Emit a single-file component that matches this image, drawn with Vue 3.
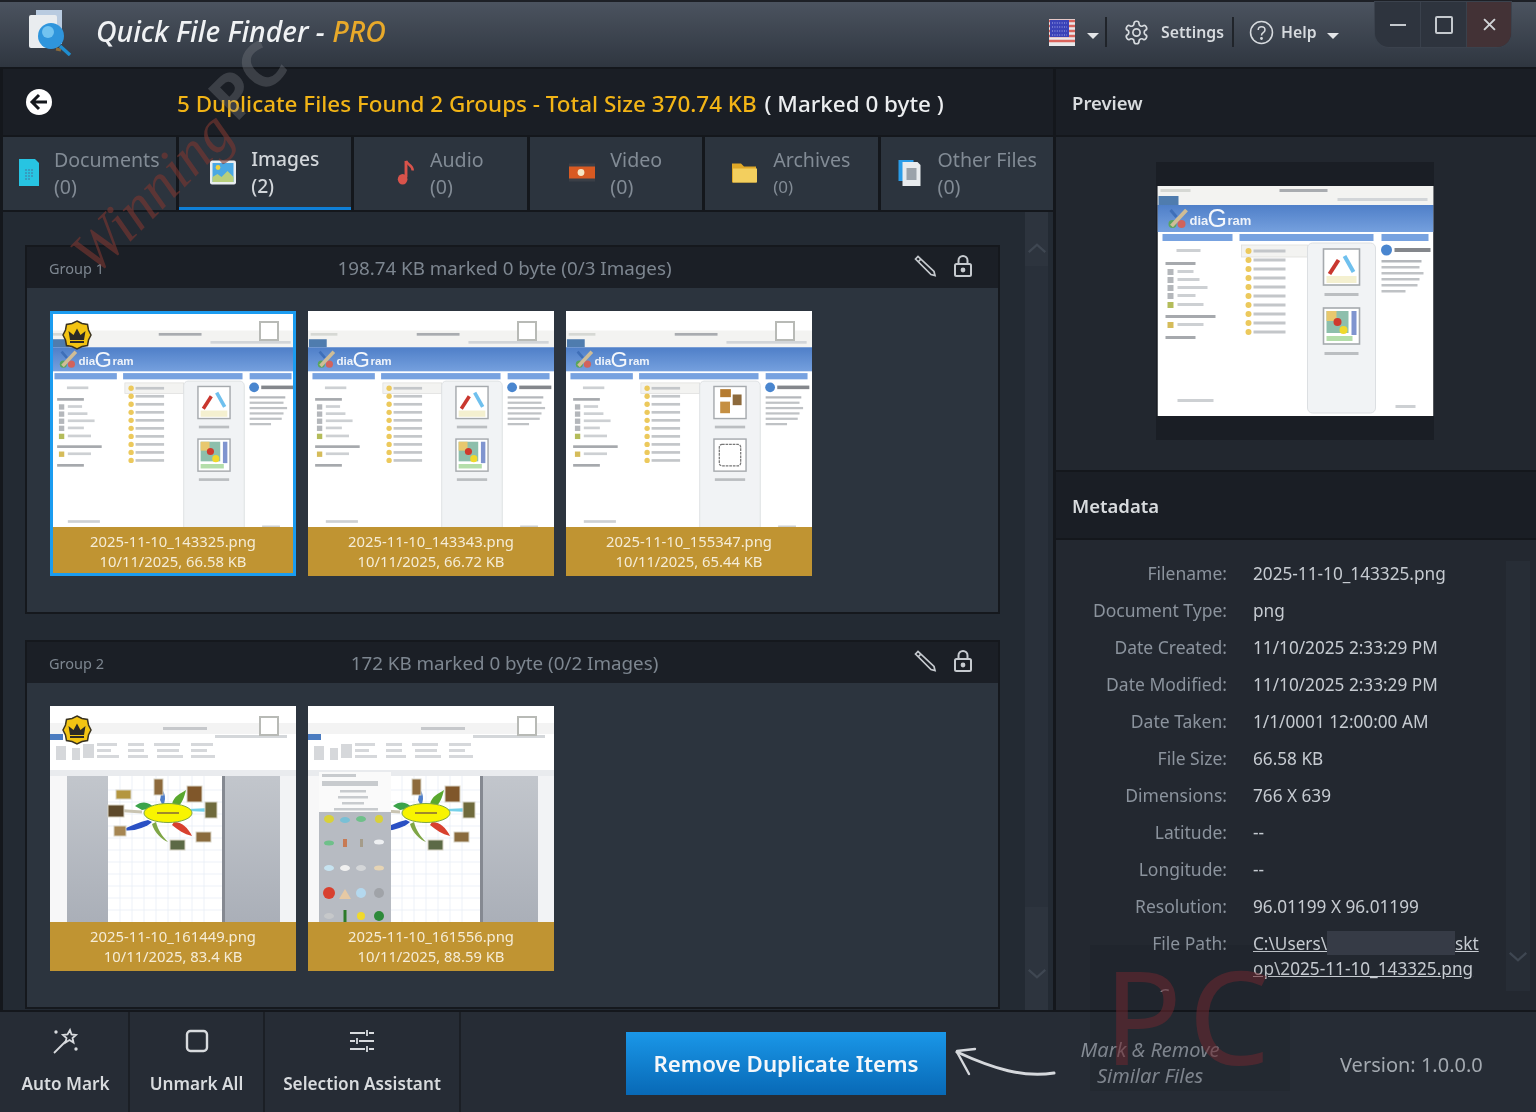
<template>
  <div class="app">
    <!-- shared drawings -->
    <svg class="defs" aria-hidden="true">
      <defs>
        <linearGradient id="band" x1="0" y1="0" x2="0" y2="1">
          <stop offset="0" stop-color="#4f7fc8" />
          <stop offset="1" stop-color="#75a0de" />
        </linearGradient>
        <linearGradient id="gutter" x1="0" y1="0" x2="0" y2="1">
          <stop offset="0" stop-color="#c2c6cc" />
          <stop offset="1" stop-color="#a9aeb7" />
        </linearGradient>
      </defs>
      <symbol id="ic-doc" viewBox="0 0 20 27">
        <path d="M0 0h16l4 4v23H0z" fill="#27c4e2" />
        <path d="M6 11h8M6 14h8M6 17h8M6 20h6" stroke="#3d8fb5" stroke-width="1.4" stroke-dasharray="2 1" />
      </symbol>
      <symbol id="ic-image" viewBox="0 0 26 24">
        <rect width="26" height="24" rx="2" fill="#e9edf0" />
        <rect x="2.5" y="2.5" width="21" height="19" fill="#4aa8e4" />
        <circle cx="8" cy="7" r="2.4" fill="#f0d23c" />
        <path d="M2.5 21.5v-5l5-3 4 3 6-6 6 6v5z" fill="#b8cf7c" />
      </symbol>
      <symbol id="ic-audio" viewBox="0 0 18 28">
        <path d="M9 2v17" stroke="#d9534b" stroke-width="3" fill="none" />
        <path d="M9 2c1 4 7 4 7 10" stroke="#d9534b" stroke-width="2.6" fill="none" />
        <ellipse cx="5.5" cy="21" rx="5" ry="5.5" fill="#d9534b" />
      </symbol>
      <symbol id="ic-video" viewBox="0 0 26 18">
        <rect width="26" height="18" fill="#3a3f47" />
        <rect y="3" width="26" height="12" fill="#d85a22" />
        <circle cx="12" cy="9" r="3.4" fill="#f6e6c4" />
      </symbol>
      <symbol id="ic-folder" viewBox="0 0 26 20">
        <path d="M0 1h9l3 3h12v16H0z" fill="#e0a827" />
        <path d="M1 6h24v14H1z" fill="#f3cf5e" />
      </symbol>
      <symbol id="ic-other" viewBox="0 0 23 27">
        <path d="M0 1h15v21H0z" fill="#2a9ce8" />
        <path d="M4 3h15l3 3v21H4z" fill="#e8ebee" />
        <path d="M8 9h10v12H8z" fill="#9aa2aa" />
      </symbol>

      <symbol id="start-page" viewBox="0 0 276 230">
        <rect width="276" height="230" fill="#fff" />
        <rect width="276" height="19" fill="#f3f3f1" />
        <rect x="3" y="3" width="30" height="3" fill="#d6d8d4" />
        <rect x="122" y="3" width="48" height="3" fill="#a9acb0" />
        <rect x="180" y="12" width="90" height="3" fill="#d2d5d8" />
        <rect x="1" y="10" width="20" height="9" fill="#4f7cae" />
        <rect y="19" width="276" height="27" fill="url(#band)" />
        <circle cx="15" cy="38" r="4" fill="#5aa55c" />
        <circle cx="24" cy="38" r="4" fill="#d2635c" />
        <path d="M14 40 29 24" stroke="#cfbd96" stroke-width="4" />
        <path d="M13 24l6 7" stroke="#3f6fb8" stroke-width="3" />
        <rect x="5" y="48" width="70" height="7" fill="#77a2e0" />
        <rect x="82" y="48" width="134" height="7" fill="#77a2e0" />
        <rect x="224" y="48" width="47" height="7" fill="#77a2e0" />
        <g fill="#cdd0d3">
          <rect x="19" y="63" width="24" height="3" />
          <rect x="8" y="76" width="30" height="3" fill="#a6a9ad" />
          <rect x="20" y="84" width="16" height="3" />
          <rect x="20" y="92" width="22" height="3" />
          <rect x="20" y="100" width="30" height="3" />
          <rect x="20" y="108" width="18" height="3" />
          <rect x="20" y="117" width="26" height="3" />
          <rect x="8" y="129" width="50" height="3" fill="#a6a9ad" />
          <rect x="20" y="137" width="26" height="3" />
          <rect x="8" y="150" width="30" height="3" fill="#a6a9ad" />
          <rect x="20" y="213" width="36" height="3" />
          <rect x="238" y="219" width="20" height="3" />
        </g>
        <g>
          <rect x="10" y="83" width="6" height="6" fill="#b4b7bb" />
          <rect x="10" y="91" width="6" height="6" fill="#b4b7bb" />
          <rect x="10" y="99" width="6" height="6" fill="#b4b7bb" />
          <rect x="10" y="107" width="6" height="6" fill="#b4b7bb" />
          <rect x="10" y="116" width="6" height="6" fill="#b4bc5a" />
          <rect x="10" y="136" width="6" height="6" fill="#d5bc5a" />
        </g>
        <rect x="84" y="59" width="66" height="12" fill="#f3f3f1" stroke="#dededc" stroke-width=".8" />
        <g fill="#ecc95c">
          <circle v-for="y in listRows" :key="y" cx="91" :cy="y" r="3" />
        </g>
        <g fill="#c3c6c9">
          <rect v-for="y in listRows" :key="y" x="96" :y="y - 1.5" width="32" height="3" />
        </g>
        <rect x="150" y="57" width="68" height="170" rx="5" fill="#f1f3f5" stroke="#dcdfe2" />
        <rect x="224" y="74" width="40" height="2.5" fill="#b4b7bb" />
        <rect x="224" y="80" width="38" height="2.5" fill="#bfc2c5" />
        <rect x="224" y="86" width="42" height="2.5" fill="#bfc2c5" />
        <rect x="224" y="92" width="38" height="2.5" fill="#bfc2c5" />
        <rect x="224" y="98" width="36" height="2.5" fill="#bfc2c5" />
        <rect x="224" y="104" width="24" height="2.5" fill="#bfc2c5" />
        <circle cx="229" cy="64" r="5.5" fill="#4a86cf" />
        <rect x="237" y="62" width="36" height="4" fill="#84878c" />
        <rect x="167" y="107" width="34" height="3" fill="#bbbec1" />
        <rect x="167" y="166" width="34" height="3" fill="#bbbec1" />
      </symbol>
      <symbol id="tiles-a" viewBox="0 0 276 230">
        <rect x="166" y="63" width="36" height="36" fill="#fff" stroke="#a6aaae" stroke-width="1.6" />
        <path d="M172 88l9-14" stroke="#c9372f" stroke-width="4" />
        <path d="M196 86l-9-16" stroke="#6fc0ee" stroke-width="4" />
        <rect x="169" y="90" width="30" height="7" fill="#f4f0d0" />
        <rect x="166" y="122" width="36" height="36" fill="#fff" stroke="#a6aaae" stroke-width="1.6" />
        <rect x="169" y="125" width="22" height="22" fill="#8dbfac" />
        <rect x="169" y="125" width="10" height="10" fill="#e8c86e" />
        <circle cx="180" cy="136" r="4" fill="#cf3a2d" />
        <circle cx="186" cy="144" r="4" fill="#f0d92c" />
        <rect x="194" y="125" width="5" height="24" fill="#7f94cf" />
        <rect x="169" y="150" width="26" height="5" fill="#b4deaa" />
      </symbol>
      <symbol id="tiles-b" viewBox="0 0 276 230">
        <rect x="166" y="63" width="36" height="36" fill="#fff" stroke="#a6aaae" stroke-width="1.6" />
        <rect x="173" y="66" width="12" height="9" fill="#b57b30" />
        <rect x="187" y="72" width="10" height="12" fill="#8d6a3c" />
        <rect x="173" y="80" width="11" height="13" fill="#c58f42" />
        <rect x="166" y="122" width="36" height="36" fill="#fff" stroke="#a6aaae" stroke-width="1.6" />
        <rect x="172" y="128" width="24" height="24" rx="3" fill="#fff" stroke="#777" stroke-width="1.4" stroke-dasharray="3 1" />
      </symbol>

      <symbol id="mind-map" viewBox="0 0 246 216">
        <rect width="246" height="216" fill="#fff" />
        <rect y="17" width="246" height="11" fill="#f3f3f3" />
        <rect x="113" y="21" width="44" height="3" fill="#c6c8cb" />
        <rect x="165" y="29" width="72" height="3" fill="#d4d7da" />
        <rect y="28" width="13" height="6" fill="#4b7cc0" />
        <g fill="#d6d8db">
          <rect x="6" y="40" width="10" height="14" />
          <rect x="22" y="42" width="8" height="12" />
          <rect x="33" y="38" width="11" height="14" />
          <rect x="47" y="37" width="20" height="3" />
          <rect x="47" y="43" width="14" height="3" />
          <rect x="47" y="49" width="22" height="3" />
          <rect x="78" y="37" width="16" height="3" />
          <rect x="78" y="43" width="16" height="3" />
          <rect x="78" y="49" width="20" height="3" />
          <rect x="104" y="37" width="26" height="3" />
          <rect x="107" y="43" width="22" height="3" />
          <rect x="107" y="49" width="26" height="3" />
          <rect x="141" y="37" width="22" height="3" />
          <rect x="141" y="43" width="16" height="3" />
          <rect x="141" y="49" width="24" height="3" />
        </g>
        <rect y="64" width="246" height="6" fill="#e9ebee" />
        <rect x="0" y="70" width="17" height="153" fill="#f7f7f8" />
        <rect x="17" y="70" width="41" height="153" fill="url(#gutter)" />
        <rect x="172" y="70" width="3" height="153" fill="#858991" />
        <rect x="175" y="70" width="55" height="153" fill="url(#gutter)" />
        <rect x="230" y="70" width="16" height="153" fill="#f2f3f5" />
        <rect x="58" y="70" width="114" height="153" fill="#fff" />
        <path d="M58 84H172M58 96H172M58 108H172M58 120H172M58 132H172M58 144H172M58 156H172M58 168H172M58 180H172M58 192H172M58 204H172M70 70V223M82 70V223M94 70V223M106 70V223M118 70V223M130 70V223M142 70V223M154 70V223" stroke="#e9eef6" stroke-width=".8" />
        <path d="M85 100C92 94 100 96 104 102L92 104Z" fill="#3aa34a" />
        <path d="M110 94C112 88 110 84 108 78 113 84 118 90 113 100Z" fill="#4f7ec9" />
        <path d="M122 98C124 90 130 88 136 84 134 92 132 98 126 102Z" fill="#5aa82e" />
        <path d="M138 103l22-1v4l-22-1z" fill="#74d1ea" />
        <path d="M124 116C132 116 138 122 142 130 134 128 128 124 122 119Z" fill="#d8402e" />
        <path d="M106 116C108 124 112 130 118 136 112 134 104 126 102 118Z" fill="#7fa646" />
        <path d="M98 114C90 116 80 120 72 124 82 126 96 122 102 116Z" fill="#2a50c4" />
        <path d="M92 106 62 104" stroke="#c9c4b2" stroke-width="3" />
        <rect x="104" y="73" width="9" height="16" fill="#8d6a3c" stroke="#d8d4c6" />
        <rect x="137" y="80" width="15" height="16" fill="#80572a" stroke="#d8d4c6" />
        <rect x="155" y="96" width="12" height="16" fill="#6f6a3c" stroke="#d8d4c6" />
        <rect x="146" y="126" width="15" height="10" fill="#8a6b3d" stroke="#d8d4c6" />
        <rect x="120" y="134" width="15" height="10" fill="#5c6a46" stroke="#d8d4c6" />
        <rect x="64" y="120" width="12" height="10" fill="#a68652" stroke="#d8d4c6" />
        <rect x="58" y="99" width="16" height="12" fill="#5e4a2c" stroke="#d8d4c6" />
        <rect x="66" y="84" width="15" height="9" fill="#b4963f" stroke="#d8d4c6" />
        <ellipse cx="118" cy="107" rx="24" ry="9.5" fill="#f8f400" stroke="#7fa646" />
        <rect x="107" y="106" width="22" height="2" fill="#a08b2a" />
      </symbol>
      <symbol id="library" viewBox="0 0 246 216">
        <rect x="11" y="66" width="72" height="157" fill="#b7bbc2" />
        <rect x="11" y="66" width="72" height="40" fill="#fafafa" />
        <g fill="#c8cbce">
          <rect x="14" y="68" width="34" height="3" />
          <rect x="14" y="75" width="56" height="5" />
          <rect x="32" y="84" width="26" height="2.5" />
          <rect x="30" y="90" width="30" height="2.5" />
          <rect x="34" y="96" width="22" height="2.5" />
          <rect x="26" y="102" width="44" height="2.5" />
        </g>
        <g>
          <ellipse cx="21" cy="113" rx="5" ry="4" fill="#d9d13a" />
          <ellipse cx="37" cy="114" rx="5" ry="3" fill="#79c0d6" />
          <ellipse cx="53" cy="113" rx="5" ry="3" fill="#6fc08a" />
          <circle cx="71" cy="113" r="4" fill="#d9d13a" />
          <ellipse cx="21" cy="137" rx="5" ry="2.5" fill="#6fc08a" />
          <rect x="35" y="133" width="4" height="8" fill="#c77a54" />
          <rect x="52" y="133" width="3" height="8" fill="#a59c8a" />
          <ellipse cx="71" cy="136" rx="5" ry="2.5" fill="#eef0f2" />
          <ellipse cx="21" cy="162" rx="5" ry="3" fill="#c6e3f0" />
          <ellipse cx="37" cy="162" rx="5" ry="3" fill="#f0f0f0" />
          <ellipse cx="53" cy="162" rx="5" ry="3" fill="#d4d6d8" />
          <ellipse cx="71" cy="162" rx="5" ry="2.5" fill="#e6d4b4" />
          <circle cx="21" cy="187" r="6" fill="#d8402e" />
          <path d="M31 193l6-10 6 10z" fill="#e6c9a4" />
          <circle cx="53" cy="187" r="5" fill="#b4d8ee" />
          <circle cx="71" cy="187" r="5" fill="#a0a3a8" />
          <ellipse cx="21" cy="210" rx="5" ry="3" fill="#c6c8ca" />
          <path d="M37 204v12" stroke="#2d7a2a" stroke-width="3" />
          <circle cx="53" cy="210" r="4" fill="#f0d92c" />
          <circle cx="71" cy="210" r="5" fill="#2d8a3a" />
        </g>
      </symbol>
    </svg>

    <header class="titlebar">
      <svg class="logo" viewBox="0 0 46 46">
        <rect x="8" y="0" width="26" height="34" fill="#b9cbe0" />
        <rect x="1" y="5" width="28" height="33" rx="2" fill="#e9ecef" />
        <circle cx="23" cy="26" r="13" fill="#2f95dc" />
        <circle cx="20" cy="22" r="6" fill="#72c3f0" />
        <path d="M28 39l5 1" stroke="#8a6a3a" stroke-width="3" />
        <path d="M32 36l10 9" stroke="#1f8ed0" stroke-width="3.4" />
      </svg>
      <div class="app-name">Quick File Finder - <span>PRO</span></div>
      <div class="title-tools">
        <svg class="flag" viewBox="0 0 26 27">
          <rect width="26" height="27" fill="#e8e8ea" />
          <path d="M0 2h26M0 7h26M0 12h26M0 17h26M0 22h26" stroke="#d9635c" stroke-width="2.5" />
          <rect x="1" y="1" width="19" height="17" fill="#3a42b8" />
          <path d="M3 4h15M3 8h15M3 12h15M3 16h15" stroke="#aab0ea" stroke-width="1.2" stroke-dasharray="1 1.4" />
        </svg>
        <i class="caret flag-caret"></i>
        <i class="vsep"></i>
        <svg class="gear" viewBox="0 0 24 24" fill="none" stroke="#d6dade" stroke-width="1.5">
          <path d="M12.22 2h-.44a2 2 0 0 0-2 2v.18a2 2 0 0 1-1 1.73l-.43.25a2 2 0 0 1-2 0l-.15-.08a2 2 0 0 0-2.73.73l-.22.38a2 2 0 0 0 .73 2.73l.15.1a2 2 0 0 1 1 1.72v.51a2 2 0 0 1-1 1.74l-.15.09a2 2 0 0 0-.73 2.73l.22.38a2 2 0 0 0 2.73.73l.15-.08a2 2 0 0 1 2 0l.43.25a2 2 0 0 1 1 1.73V20a2 2 0 0 0 2 2h.44a2 2 0 0 0 2-2v-.18a2 2 0 0 1 1-1.73l.43-.25a2 2 0 0 1 2 0l.15.08a2 2 0 0 0 2.73-.73l.22-.39a2 2 0 0 0-.73-2.73l-.15-.08a2 2 0 0 1-1-1.74v-.5a2 2 0 0 1 1-1.74l.15-.09a2 2 0 0 0 .73-2.73l-.22-.38a2 2 0 0 0-2.73-.73l-.15.08a2 2 0 0 1-2 0l-.43-.25a2 2 0 0 1-1-1.73V4a2 2 0 0 0-2-2z" />
          <circle cx="12" cy="12" r="3.2" />
        </svg>
        <span class="tool-text settings">Settings</span>
        <i class="vsep"></i>
        <svg class="help" viewBox="0 0 26 26" fill="none" stroke="#d6dade" stroke-width="1.6">
          <circle cx="13" cy="13" r="11.4" />
          <path d="M9.6 10.4c0-4.4 7-4.4 7 0 0 2.8-3.6 2.8-3.6 5.6" />
          <circle cx="13" cy="19.2" r=".7" fill="#d6dade" />
        </svg>
        <span class="tool-text help-text">Help</span>
        <i class="caret help-caret"></i>
      </div>
      <div class="win-btns">
        <button type="button" class="win"><i class="min"></i></button>
        <button type="button" class="win"><i class="max"></i></button>
        <button type="button" class="win close">
          <svg viewBox="0 0 12 12" width="13" height="13" stroke="#d0d3d6" stroke-width="1.8"><path d="M1 1l10 10M11 1 1 11" /></svg>
        </button>
      </div>
    </header>

    <section class="left">
      <div class="result-bar">
        <svg class="back" viewBox="0 0 26 26">
          <circle cx="13" cy="13" r="13" fill="#fff" />
          <path d="M13 6l-7 7 7 7M6.5 13H21" fill="none" stroke="#14171c" stroke-width="3" />
        </svg>
        <div class="result-text">5 Duplicate Files Found 2 Groups - Total Size 370.74 KB <span>( Marked 0 byte )</span></div>
      </div>

      <nav class="tabs">
        <div v-for="t in tabs" :key="t.name" class="tab" :class="{ active: t.active }">
          <svg class="tab-icon" :class="'i-' + t.icon"><use :href="'#ic-' + t.icon" /></svg>
          <div class="tab-label">
            <div>{{ t.name }}</div>
            <div class="tab-count" :class="{ small: t.smallCount }">({{ t.count }})</div>
          </div>
        </div>
      </nav>

      <div class="results">
        <div class="group-list">
          <div v-for="g in groups" :key="g.name" class="group">
            <div class="group-head">
              <span class="group-name">{{ g.name }}</span>
              <span class="group-info">{{ g.info }}</span>
              <span class="group-tools">
                <svg viewBox="0 0 24 24" width="24" height="24" fill="none" stroke="#c6cacf" stroke-width="1.7">
                  <path d="M2.5 5 5 2.5l16 15 1 4-4-1z" />
                  <path d="M5.5 7.5 8 5" />
                </svg>
                <svg viewBox="0 0 20 24" width="20" height="24" fill="none" stroke="#c6cacf" stroke-width="2">
                  <rect x="2" y="10" width="16" height="12" rx="1.5" />
                  <path d="M5.5 10V6.500a4.500 4.500 0 0 1 9 0V10" />
                  <circle cx="10" cy="16" r="1.4" fill="#c6cacf" />
                </svg>
              </span>
            </div>
            <div class="thumbs">
              <div v-for="f in g.files" :key="f.file" class="thumb" :class="{ selected: f.selected }">
                <svg v-if="f.kind !== 'map'" class="shot" viewBox="0 -21.5 276 242">
                  <use href="#start-page" width="276" height="230" />
                  <use :href="f.kind === 'start2' ? '#tiles-b' : '#tiles-a'" width="276" height="230" />
                  <text x="32" y="39" class="logo-small">dia</text>
                  <text x="50" y="41" class="logo-big">G</text>
                  <text x="70" y="39" class="logo-small">ram</text>
                </svg>
                <svg v-else class="shot" viewBox="0 0 246 216">
                  <use href="#mind-map" width="246" height="216" />
                  <use v-if="f.library" href="#library" width="246" height="216" />
                </svg>
                <svg v-if="f.crown" class="crown" viewBox="0 0 30 30">
                  <path d="M15 1l5 2.500 5.500 1 1 5.500L29 15l-2.500 5-1 5.500-5.500 1L15 29l-5-2.500-5.500-1-1-5.500L1 15l2.500-5 1-5.500 5.500-1z" fill="#f3c412" stroke="#3a3320" stroke-width="1.5" />
                  <path d="M8 20l-1.500-9 5 4L15 8.500l3.500 6.500 5-4-1.500 9z" fill="#2c2a26" />
                  <rect x="8" y="21" width="14" height="2" fill="#2c2a26" />
                </svg>
                <i class="check"></i>
                <div class="caption">
                  <div>{{ f.file }}</div>
                  <div>{{ f.stamp }}</div>
                </div>
              </div>
            </div>
          </div>
        </div>
        <div class="scroll">
          <div class="scroll-btn">
            <svg viewBox="0 0 24 12" width="22" height="11" fill="none" stroke="#3f4752" stroke-width="2.5"><path d="M3 11l9-8 9 8" /></svg>
          </div>
          <div class="scroll-btn low">
            <svg viewBox="0 0 24 12" width="22" height="11" fill="none" stroke="#3f4752" stroke-width="2.5"><path d="M3 1l9 8 9-8" /></svg>
          </div>
        </div>
      </div>
    </section>

    <aside class="right">
      <div class="side-head">Preview</div>
      <div class="preview">
        <div class="preview-frame">
          <svg class="preview-shot" viewBox="0 0 276 230">
            <use href="#start-page" width="276" height="230" />
            <use href="#tiles-a" width="276" height="230" />
            <text x="32" y="39" class="logo-small">dia</text>
            <text x="50" y="41" class="logo-big">G</text>
            <text x="70" y="39" class="logo-small">ram</text>
          </svg>
        </div>
      </div>
      <div class="side-head">Metadata</div>
      <div class="meta">
        <div class="meta-rows">
          <div v-for="m in meta" :key="m.label" class="meta-row">
            <span class="meta-label">{{ m.label }}</span>
            <span class="meta-value">{{ m.value }}</span>
          </div>
          <div class="meta-row">
            <span class="meta-label">File Path:</span>
            <span class="meta-value path"><span class="masked">C:\Users\<i></i>skt</span><br />op\2025-11-10_143325.png</span>
          </div>
          <div class="meta-row">
            <span class="meta-label">Camera:</span>
            <span class="meta-value"></span>
          </div>
        </div>
        <div class="meta-scroll">
          <svg viewBox="0 0 24 12" width="22" height="11" fill="none" stroke="#3f4752" stroke-width="2.5"><path d="M3 1l9 8 9-8" /></svg>
        </div>
      </div>
    </aside>

    <footer class="bottom">
      <button type="button" class="tool auto">
        <svg viewBox="0 0 28 28" width="28" height="28" fill="none" stroke="#d8dbde" stroke-width="1.8">
          <path d="M2 26l12-12" />
          <path d="M18 3l1.500 4.500 4.500.5-3.500 3 1 4.500-4-2.500-4 2.500 1-4.500-3.500-3 4.500-.5z" />
          <circle cx="4" cy="5" r=".8" fill="#d8dbde" />
          <circle cx="24" cy="22" r=".8" fill="#d8dbde" />
        </svg>
        <span>Auto Mark</span>
      </button>
      <button type="button" class="tool unmark">
        <svg viewBox="0 0 28 28" width="28" height="28" fill="none" stroke="#d8dbde" stroke-width="2.4">
          <rect x="4" y="4" width="20" height="20" rx="3.5" />
        </svg>
        <span>Unmark All</span>
      </button>
      <button type="button" class="tool assist">
        <svg viewBox="0 0 28 28" width="28" height="28" fill="none" stroke="#d8dbde" stroke-width="1.8">
          <path d="M2 6h15M21 6h5M2 14h5M11 14h15M2 22h15M21 22h5" />
          <path d="M19 3v6M9 11v6M19 19v6" />
        </svg>
        <span>Selection Assistant</span>
      </button>
      <button type="button" class="remove">Remove Duplicate Items</button>
      <svg class="arrow" viewBox="0 0 102 36" fill="none" stroke="#d5d8dc" stroke-linecap="round">
        <path d="M100 26C70 31 40 22 3 5" stroke-width="3" />
        <path d="M3 4 21 2M3 5 15 27" stroke-width="2.4" />
      </svg>
      <div class="hint">Mark &amp; Remove<br />Similar Files</div>
      <div class="version">Version: 1.0.0.0</div>
    </footer>

    <!-- watermarks laid over the window -->
    <div class="wm-pc-top">PC</div>
    <div class="wm-winning">Winning</div>
    <div class="wm-box"><span>PC</span></div>
  </div>
</template>

<script setup>
const tabs = [
  { name: 'Documents', count: 0, icon: 'doc' },
  { name: 'Images', count: 2, icon: 'image', active: true },
  { name: 'Audio', count: 0, icon: 'audio' },
  { name: 'Video', count: 0, icon: 'video' },
  { name: 'Archives', count: 0, icon: 'folder', smallCount: true },
  { name: 'Other Files', count: 0, icon: 'other' },
]

const groups = [
  {
    name: 'Group 1',
    info: '198.74 KB marked 0 byte (0/3 Images)',
    files: [
      { file: '2025-11-10_143325.png', stamp: '10/11/2025, 66.58 KB', kind: 'start', crown: true, selected: true },
      { file: '2025-11-10_143343.png', stamp: '10/11/2025, 66.72 KB', kind: 'start' },
      { file: '2025-11-10_155347.png', stamp: '10/11/2025, 65.44 KB', kind: 'start2' },
    ],
  },
  {
    name: 'Group 2',
    info: '172 KB marked 0 byte (0/2 Images)',
    files: [
      { file: '2025-11-10_161449.png', stamp: '10/11/2025, 83.4 KB', kind: 'map', crown: true },
      { file: '2025-11-10_161556.png', stamp: '10/11/2025, 88.59 KB', kind: 'map', library: true },
    ],
  },
]

const meta = [
  { label: 'Filename:', value: '2025-11-10_143325.png' },
  { label: 'Document Type:', value: 'png' },
  { label: 'Date Created:', value: '11/10/2025 2:33:29 PM' },
  { label: 'Date Modified:', value: '11/10/2025 2:33:29 PM' },
  { label: 'Date Taken:', value: '1/1/0001 12:00:00 AM' },
  { label: 'File Size:', value: '66.58 KB' },
  { label: 'Dimensions:', value: '766 X 639' },
  { label: 'Latitude:', value: '--' },
  { label: 'Longitude:', value: '--' },
  { label: 'Resolution:', value: '96.01199 X 96.01199' },
]

// rows of the category list inside the screenshot thumbnails
const listRows = [65, 74, 83, 92, 101, 110, 119, 128, 137, 146]
</script>

<style>
html, body { margin: 0; background: #14171c; }
</style>

<style scoped>
.app {
  position: relative;
  width: 1536px;
  height: 1112px;
  overflow: hidden;
  display: grid;
  grid-template-columns: 1053px 1fr;
  grid-template-rows: 67px 941px 1fr;
  column-gap: 3px;
  row-gap: 2px;
  background: #14171c;
  font-family: "Noto Sans", "Open Sans", sans-serif;
  filter: blur(0.45px);
}
.defs { position: absolute; width: 0; height: 0; }

.titlebar {
  grid-column: 1 / -1;
  display: flex;
  align-items: center;
  position: relative;
  padding-left: 28px;
  background: linear-gradient(#4b535f, #2f3640);
  border-top: 2px solid #1d2026;
  box-sizing: border-box;
}
.logo { width: 46px; height: 46px; margin-top: -4px; }
.app-name {
  margin: -7px 0 0 22px;
  font-size: 28.4px;
  font-style: italic;
  font-weight: 500;
  color: #f0f2f4;
  white-space: nowrap;
}
.app-name span { color: #e8a92a; }
.title-tools {
  position: absolute;
  left: 1049px;
  top: 15px;
  display: flex;
  align-items: center;
  height: 30px;
}
.flag { width: 26px; height: 27px; }
.caret {
  width: 0;
  height: 0;
  border: 6px solid transparent;
  border-top: 6px solid #e3e5e8;
  border-bottom: 0;
  margin-top: 7px;
}
.flag-caret { margin-left: 12px; }
.vsep { width: 2px; height: 30px; background: #20242a; margin: 0 0 0 6px; }
.gear { width: 27px; height: 27px; margin-left: 16px; }
.tool-text { font-size: 15.8px; font-weight: 600; color: #d6dade; margin-left: 11px; }
.settings + .vsep { margin-left: 8px; }
.help { width: 25px; height: 25px; margin-left: 15px; }
.help-text { margin-left: 7px; }
.help-caret { margin-left: 10px; }
.win-btns {
  position: absolute;
  left: 1375px;
  top: 0;
  display: flex;
  height: 45px;
  border-radius: 0 0 14px 14px;
  overflow: hidden;
  background: #2e343e;
  box-shadow: 0 0 0 1px #3b424d;
}
.win {
  width: 46px;
  border: 0;
  border-right: 1px solid #3a414c;
  background: none;
  padding: 0;
  display: flex;
  align-items: center;
  justify-content: center;
}
.win.close { background: #433236; border-right: 0; width: 44px; }
.min { width: 16px; height: 2px; background: #c5c9ce; }
.max { width: 14px; height: 14px; border: 2px solid #c5c9ce; border-radius: 2px; }

.left {
  display: grid;
  grid-template-rows: 66px 73px 1fr;
  row-gap: 2px;
  min-height: 0;
  padding-left: 3px;
}
.result-bar {
  display: flex;
  align-items: center;
  padding-left: 23px;
  background: #1a1e25;
}
.back { width: 26px; height: 26px; }
.result-text {
  margin: 2px 0 0 125px;
  font-size: 22.45px;
  font-weight: 500;
  color: #f2b416;
  white-space: nowrap;
}
.result-text span { color: #eceef0; margin-left: 2px; }

.tabs {
  display: grid;
  grid-template-columns: repeat(6, 1fr);
  gap: 3px;
}
.tab {
  display: flex;
  align-items: center;
  justify-content: center;
  gap: 15px;
  padding-bottom: 2px;
  background: #2c343e;
  color: #828b95;
  font-size: 19.6px;
  line-height: 27px;
  box-sizing: border-box;
}
.tab.active {
  color: #d2d6da;
  border-bottom: 3px solid #0f7fd6;
  padding-bottom: 0;
  font-weight: 500;
  font-size: 19.2px;
}
.tab-icon { width: 26px; height: 27px; }
.i-doc { width: 20px; }
.i-audio { width: 18px; }
.tab-count.small { font-size: 17px; }

.results {
  display: grid;
  grid-template-columns: 1fr 23px;
  column-gap: 5px;
  padding-right: 5px;
  background: #232a33;
  min-height: 0;
  overflow: hidden;
}
.group-list {
  padding: 33px 0 0 22px;
  display: flex;
  flex-direction: column;
  gap: 26px;
  min-height: 0;
  overflow: hidden;
  margin-right: 20px;
}
.group {
  flex: none;
  height: 369px;
  border: 2px solid #15181d;
  box-sizing: border-box;
  background: #2c343e;
}
.group-head {
  display: grid;
  grid-template-columns: 280px 1fr 280px;
  align-items: center;
  height: 41px;
  background: #1b1f26;
  color: #7d8690;
}
.group-name { padding-left: 22px; font-size: 14.5px; }
.group-info { font-size: 18.8px; text-align: center; padding-right: 16px; white-space: nowrap; }
.group-tools { display: flex; justify-content: flex-end; align-items: center; gap: 16px; padding-right: 25px; }
.group-tools svg { margin-top: -3px; }
.thumbs {
  display: flex;
  gap: 12px;
  padding: 23px 0 0 23px;
}
.thumb {
  position: relative;
  width: 246px;
  height: 265px;
  display: flex;
  flex-direction: column;
  background: #fff;
  box-sizing: border-box;
}
.thumb.selected::after {
  content: "";
  position: absolute;
  inset: 0;
  border: 3px solid #1b9cf0;
  pointer-events: none;
}
.shot { width: 246px; height: 216px; display: block; filter: blur(0.6px); }
.caption {
  height: 49px;
  background: #c09432;
  color: #f5ecd6;
  font-size: 14.8px;
  line-height: 20px;
  text-align: center;
  padding-top: 4px;
  box-sizing: border-box;
}
.crown { position: absolute; left: 12px; top: 9px; width: 30px; height: 30px; }
.check {
  position: absolute;
  right: 17px;
  top: 10px;
  width: 20px;
  height: 20px;
  border: 2.5px solid #b8bab6;
  background: #fff;
  box-sizing: border-box;
}
.scroll {
  display: flex;
  flex-direction: column;
  justify-content: space-between;
  background: #29303a;
}
.scroll-btn {
  height: 54px;
  display: flex;
  align-items: flex-end;
  justify-content: center;
  padding-bottom: 13px;
  box-sizing: border-box;
  background: #2d343e;
}
.scroll-btn.low {
  height: 103px;
  padding-bottom: 30px;
}

.right {
  display: grid;
  grid-template-rows: 66px 333px 66px 1fr;
  row-gap: 2px;
  min-height: 0;
}
.side-head {
  display: flex;
  align-items: center;
  padding: 1px 0 0 16px;
  background: #1a1e25;
  color: #d8dbde;
  font-size: 18.5px;
  font-weight: 600;
}
.preview {
  background: #22272f;
  display: flex;
  justify-content: center;
  align-items: flex-start;
  padding: 25px 2px 0 0;
}
.preview-frame {
  width: 278px;
  height: 278px;
  background: #1a1e25;
  display: flex;
  align-items: center;
  justify-content: center;
}
.preview-shot { width: 277px; height: 230px; display: block; filter: blur(0.6px); }
.meta {
  background: #232830;
  display: grid;
  grid-template-columns: 1fr 24px;
  padding: 15px 6px 0 0;
  min-height: 0;
  overflow: hidden;
}
.meta-rows { height: 437px; overflow: hidden; }
.meta-row {
  display: grid;
  grid-template-columns: 171px 1fr;
  column-gap: 26px;
  font-size: 17.5px;
  line-height: 37px;
}
.meta-label { text-align: right; color: #8b939d; white-space: nowrap; }
.meta-value { color: #c6cbd1; white-space: nowrap; font-size: 17.2px; }
.path { text-decoration: underline; line-height: 25px; display: block; padding-top: 6px; margin-bottom: -4px; }
.masked i {
  display: inline-block;
  width: 128px;
  height: 24px;
  vertical-align: -5px;
  background: #363b46;
}
.meta-scroll {
  height: 430px;
  margin-top: 6px;
  background: #272d36;
  display: flex;
  align-items: flex-end;
  justify-content: center;
  padding-bottom: 28px;
  box-sizing: border-box;
}

.bottom {
  grid-column: 1 / -1;
  display: flex;
  align-items: center;
  background: #262c35;
  padding-left: 3px;
}
.tool {
  height: 100%;
  border: 0;
  border-right: 2px solid #1b1f25;
  background: #262c35;
  color: #d8dbde;
  font: inherit;
  font-size: 17.2px;
  font-weight: 600;
  display: flex;
  flex-direction: column;
  align-items: center;
  justify-content: flex-start;
  gap: 17px;
  padding: 15px 0 0;
  box-sizing: border-box;
  white-space: nowrap;
}
.tool.auto { width: 127px; }
.tool.unmark { width: 135px; }
.tool.assist { width: 196px; }
.remove {
  width: 320px;
  height: 63px;
  margin: 2px 0 0 165px;
  border: 0;
  background: linear-gradient(#1a97e8, #0869b6);
  color: #f4f7fa;
  font: inherit;
  font-size: 22.3px;
  font-weight: 600;
  padding-right: 6px;
}
.arrow { width: 102px; height: 36px; margin: 6px 0 0 8px; flex: none; }
.hint {
  width: 190px;
  flex: none;
  margin: 2px 0 0 -1px;
  text-align: center;
  font-style: italic;
  font-size: 20px;
  line-height: 26px;
  color: #868d96;
}
.version {
  margin: 5px 0 0 95px;
  font-size: 20px;
  color: #a3a9b0;
  white-space: nowrap;
}

.wm-pc-top {
  position: absolute;
  left: 207px;
  top: 37px;
  font-size: 62px;
  font-weight: 700;
  color: rgba(130, 135, 140, 0.32);
  transform: rotate(-45deg);
  pointer-events: none;
}
.wm-winning {
  position: absolute;
  left: 52px;
  top: 158px;
  font-family: "Liberation Serif", serif;
  font-style: italic;
  font-size: 60px;
  color: rgba(125, 55, 48, 0.6);
  transform: rotate(-45deg);
  pointer-events: none;
}
.wm-box {
  position: absolute;
  left: 1090px;
  top: 945px;
  width: 200px;
  height: 146px;
  background: rgba(0, 0, 0, 0.06);
  pointer-events: none;
  display: flex;
  justify-content: center;
}
.wm-box span {
  font-size: 130px;
  line-height: 140px;
  letter-spacing: 6px;
  color: rgba(110, 40, 48, 0.55);
}
.logo-small { font: 700 13px "Liberation Sans", sans-serif; fill: #eef3fa; }
.logo-big { font: 400 25px "Liberation Sans", sans-serif; fill: #f4f7fb; }
</style>
